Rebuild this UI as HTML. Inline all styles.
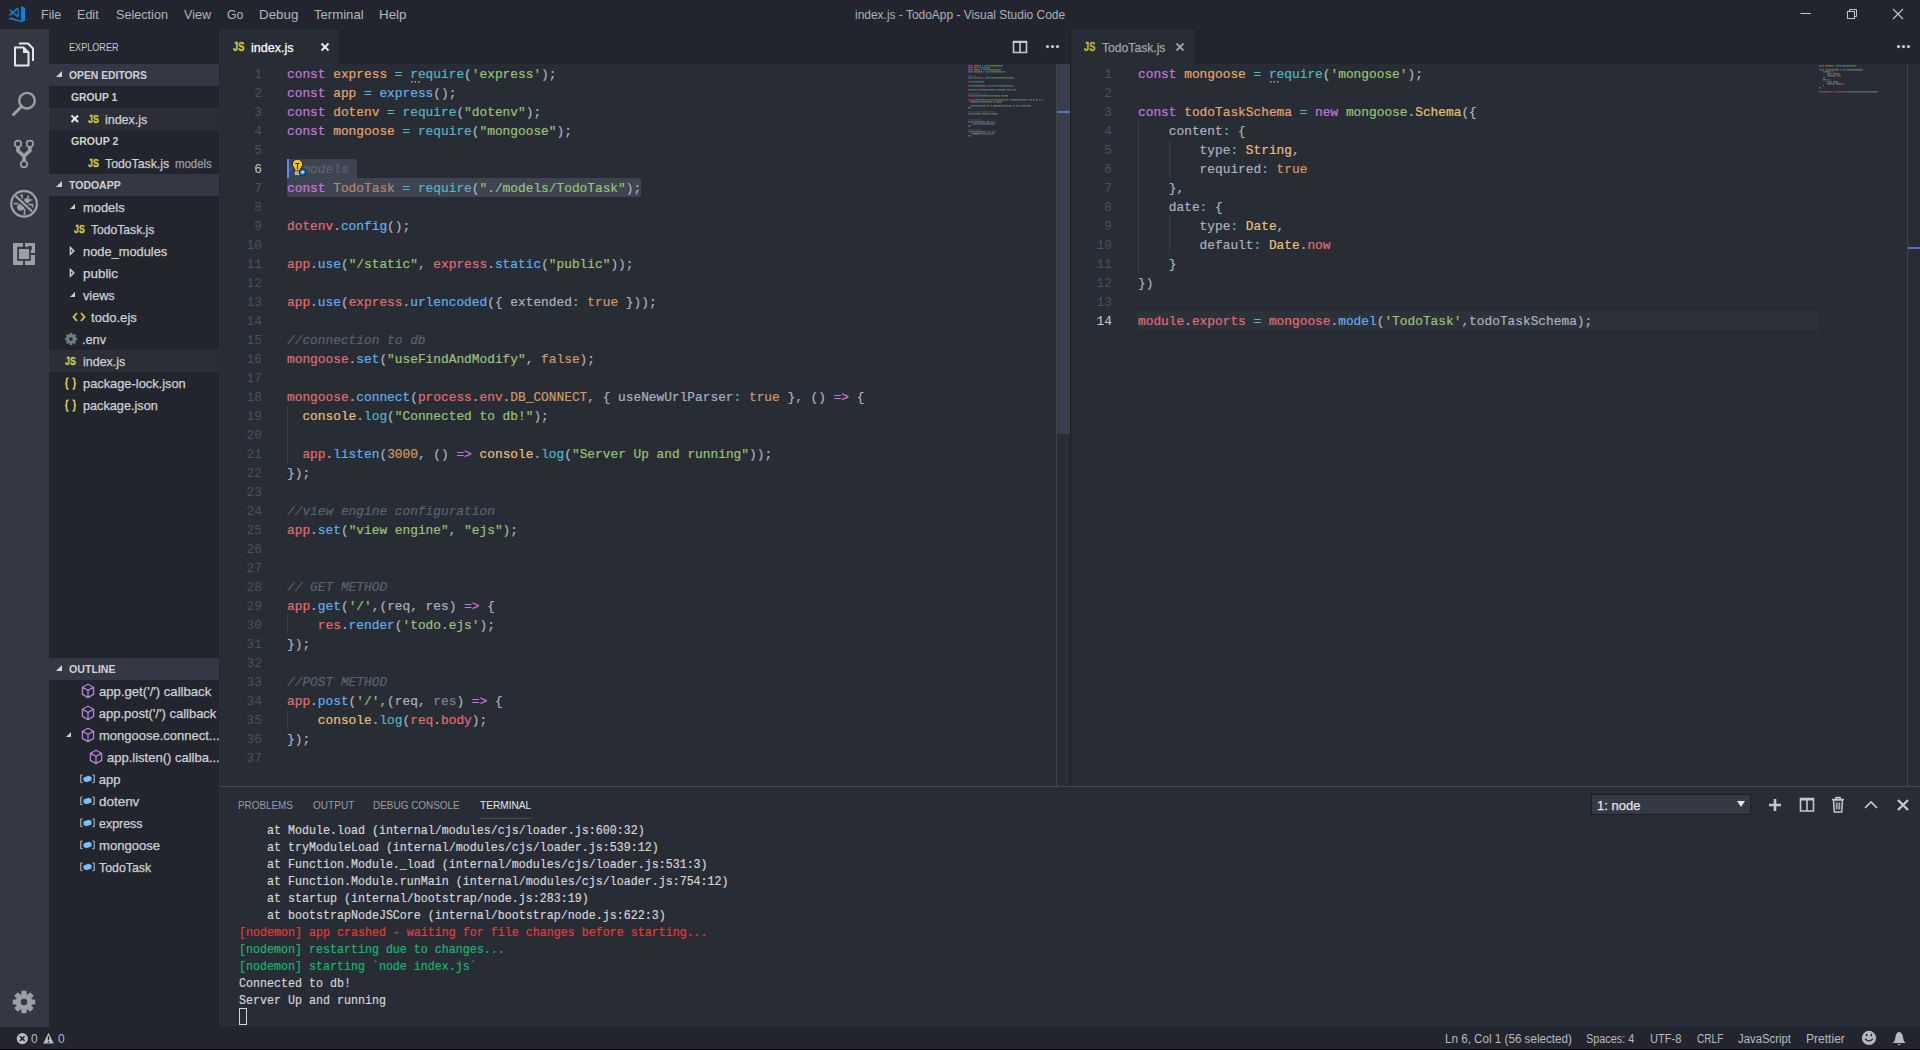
<!DOCTYPE html>
<html><head><meta charset="utf-8">
<style>
*{margin:0;padding:0;box-sizing:border-box}
html,body{width:1920px;height:1050px;overflow:hidden;background:#22252d;font-family:"Liberation Sans",sans-serif;position:relative}
div,span.a{position:absolute}
span{position:static}
.bx{position:absolute}
#title{left:0;top:0;width:1920px;height:29px;background:#22252d}
.menu{top:7px;font-size:13px;color:#b3b6bb;line-height:15px;white-space:nowrap}
#actbar{left:0;top:29px;width:49px;height:998px;background:#343842}
#actline{left:0;top:28px;width:49px;height:1px;background:#1e2126}
#actline2{left:49px;top:28px;width:1px;height:999px;background:#1e2126}
#side{left:49px;top:29px;width:170px;height:998px;background:#22252d}
.sh{left:49px;width:170px;height:22px;background:#343844}
.st{font-size:11px;line-height:22px;color:#cfd1d4;white-space:nowrap;font-weight:bold}
.row{left:49px;width:170px;height:22px}
.it{font-size:13px;line-height:22px;color:#cfd1d4;white-space:nowrap;margin-top:1px;-webkit-text-stroke:0.25px currentColor}
.tri{width:0;height:0;border-style:solid;border-width:0 0 6px 6px;border-color:transparent transparent #cfd1d4 transparent}
.trr{width:6px;height:9px}
.js{font-weight:bold;font-size:11px;color:#cbcb41;line-height:22px;white-space:nowrap;transform:scaleX(0.8);transform-origin:0 0;-webkit-text-stroke:0.35px currentColor}
.jb{font-weight:bold;font-size:12px;color:#cbcb41;line-height:22px;white-space:nowrap;letter-spacing:0.5px}
#tabs{left:219px;top:29px;width:1701px;height:35px;background:#22252d}
#ed1{left:219px;top:64px;width:851px;height:722px;background:#282c34}
#ed2{left:1071px;top:64px;width:849px;height:722px;background:#282c34}
#gsep{left:1070px;top:29px;width:1px;height:757px;background:#1b1c20}
.ln{width:40px;text-align:right;font-family:"Liberation Mono",monospace;font-size:12.83px;line-height:19px;color:#495162;white-space:pre}
.ln.act{color:#c4c8ce}
.cl{font-family:"Liberation Mono",monospace;font-size:12.83px;line-height:19px;color:#abb2bf;white-space:pre;-webkit-text-stroke:0.2px currentColor}
.k{color:#c678dd}.d{color:#e5a66b}.o{color:#56b6c2}.f{color:#61afef}.r{color:#e06c75}.s{color:#98c379}.n{color:#d19a66}.y{color:#e5c07b}.c{color:#5c6370;font-style:italic}.g{color:#98c379}.u{color:#7f848e}.dd{color:#b38a66}
#panel{left:219px;top:786px;width:1701px;height:241px;background:#282c34}
#pborder{left:219px;top:786px;width:1701px;height:1px;background:#43464d}
.ptab{top:799px;font-size:11px;line-height:13px;color:#9a9ca1;white-space:nowrap}
.term{left:239px;font-family:"Liberation Mono",monospace;font-size:13.2px;line-height:17px;color:#d4d6d9;white-space:pre;-webkit-text-stroke:0.2px currentColor;transform:scaleX(0.8838);transform-origin:0 0}
#status{left:0;top:1027px;width:1920px;height:23px;background:#22252d}
.stt{top:1032px;font-size:12px;line-height:14px;color:#b8bbc0;white-space:nowrap}
svg{position:absolute;overflow:visible}
</style></head><body>
<div id="title"></div>
<svg style="left:0;top:0" width="40" height="29" viewBox="0 0 40 29"><path d="M21 6 L23.5 7 L25 7.8 V20.3 L22.5 21.8 L21 22 Z" fill="#0a84e0"/><path d="M9.6 18.6 C12.5 17.6 15 20.8 21.5 21.3" stroke="#0a84e0" stroke-width="1.6" fill="none" stroke-linecap="round"/><path d="M10.2 10.2 L17.2 16.3 M10.2 14.9 L17.2 8.6" stroke="#0a84e0" stroke-width="1.5" stroke-linecap="round"/><path d="M17.5 8.2 L18.8 8.8 V16.8 L17.5 17.3 Z" fill="#0a84e0"/></svg>
<div class="menu" id="m_file" style="left:41.0px;transform:scaleX(0.963);transform-origin:0 0">File</div>
<div class="menu" id="m_edit" style="left:76.5px;transform:scaleX(0.966);transform-origin:0 0">Edit</div>
<div class="menu" id="m_sel" style="left:115.5px;transform:scaleX(0.972);transform-origin:0 0">Selection</div>
<div class="menu" id="m_view" style="left:183.8px;transform:scaleX(0.964);transform-origin:0 0">View</div>
<div class="menu" id="m_go" style="left:227.0px;transform:scaleX(0.941);transform-origin:0 0">Go</div>
<div class="menu" id="m_debug" style="left:258.5px;transform:scaleX(1.027);transform-origin:0 0">Debug</div>
<div class="menu" id="m_term" style="left:313.8px;transform:scaleX(1.010);transform-origin:0 0">Terminal</div>
<div class="menu" id="m_help" style="left:378.5px;transform:scaleX(1.029);transform-origin:0 0">Help</div>
<div class="menu" id="m_title" style="left:855.0px;color:#aeb1b6;transform:scaleX(0.919);transform-origin:0 0">index.js - TodoApp - Visual Studio Code</div>
<svg style="left:1795px;top:5px" width="20" height="20"><path d="M5.5 8.5 H16" stroke="#c4c6ca" stroke-width="1"/></svg>
<svg style="left:1840px;top:5px" width="20" height="20"><rect x="7.5" y="6.5" width="7" height="7" stroke="#c4c6ca" stroke-width="1" fill="none"/><path d="M9.5 6.5 V4.5 H16.5 V11.5 H14.5" stroke="#c4c6ca" stroke-width="1" fill="none"/></svg>
<svg style="left:1888px;top:5px" width="20" height="20"><path d="M5 4 L15 14 M15 4 L5 14" stroke="#c4c6ca" stroke-width="1.1" fill="none"/></svg>

<div id="actbar"></div><div id="actline"></div>

<svg style="left:0;top:29px" width="49" height="50" viewBox="0 29 49 50">
<path d="M19 43.5 H28 L33 48.5 V61" stroke="#e6e7ea" stroke-width="2" fill="none"/>
<path d="M15 47.5 H23.5 L28.5 52.5 V65.5 H15 Z" stroke="#e6e7ea" stroke-width="2" fill="none" stroke-linejoin="round"/>
<path d="M23 47 V53 H29" fill="#e6e7ea"/>
</svg>
<svg style="left:0;top:80px" width="49" height="50" viewBox="0 80 49 50">
<circle cx="27" cy="100.7" r="7.8" stroke="#9c9fa6" stroke-width="2.4" fill="none"/>
<path d="M21.5 106.5 L13.5 114.5" stroke="#9c9fa6" stroke-width="3" stroke-linecap="round"/>
</svg>
<svg style="left:0;top:130px" width="49" height="50" viewBox="0 130 49 50">
<circle cx="18" cy="143.8" r="3.2" stroke="#9c9fa6" stroke-width="1.7" fill="none"/>
<circle cx="29.9" cy="143.8" r="3.2" stroke="#9c9fa6" stroke-width="1.7" fill="none"/>
<circle cx="24" cy="164.2" r="3.2" stroke="#9c9fa6" stroke-width="1.7" fill="none"/>
<path d="M18 146.5 V150.8 L24 156 L29.9 150.8 V146.5 M24 155 V161.5" stroke="#9c9fa6" stroke-width="3.6" fill="none" stroke-linejoin="miter"/>
</svg>
<svg style="left:0;top:180px" width="49" height="50" viewBox="0 180 49 50">
<circle cx="24.1" cy="203.8" r="12.8" stroke="#9c9fa6" stroke-width="2.3" fill="none"/>
<ellipse cx="20.7" cy="207.3" rx="3.6" ry="3.4" fill="#9c9fa6"/>
<ellipse cx="27" cy="200.6" rx="2.9" ry="2.7" fill="#9c9fa6"/>
<path d="M20.3 195.3 H22 V200 M13.8 203.6 H18.5 M27.8 204.6 H32.6 V207.5 M24.6 208.5 V214.2 H23.5 M28.2 195.5 V198 M29 200 H32.3" stroke="#9c9fa6" stroke-width="1.6" fill="none"/>
<path d="M15.5 195.9 L32.2 211.5" stroke="#343842" stroke-width="5"/>
<path d="M15.5 195.9 L32.2 211.5" stroke="#9c9fa6" stroke-width="2.3"/>
</svg>
<svg style="left:0;top:230px" width="49" height="50" viewBox="0 230 49 50">
<rect x="13" y="243" width="22" height="22" fill="#9c9fa6"/>
<rect x="23" y="243" width="2" height="4" fill="#343842"/>
<rect x="23" y="261" width="2" height="4" fill="#343842"/>
<rect x="31" y="253" width="4" height="2" fill="#343842"/>
<rect x="17.2" y="246.8" width="13.6" height="14" fill="#343842"/>
<rect x="28.2" y="246.1" width="3.6" height="3.8" fill="#343842"/>
<rect x="19" y="249" width="10.1" height="10" fill="#9c9fa6"/>
</svg>
<svg style="left:0;top:980px" width="49" height="45" viewBox="0 980 49 45">
<g transform="translate(24 1002)" fill="#9c9fa6">
<circle r="8.2"/>
<rect x="-2.6" y="-11.2" width="5.2" height="22.4" rx="0.8"/>
<rect x="-2.6" y="-11.2" width="5.2" height="22.4" rx="0.8" transform="rotate(45)"/>
<rect x="-2.6" y="-11.2" width="5.2" height="22.4" rx="0.8" transform="rotate(90)"/>
<rect x="-2.6" y="-11.2" width="5.2" height="22.4" rx="0.8" transform="rotate(135)"/>
</g>
<circle cx="24" cy="1002" r="3.3" fill="#343842"/>
</svg>

<div id="side"></div>
<div class="st" id="m_expl" style="left:69.0px;top:36px;font-weight:normal;color:#c7c9cd;transform:scaleX(0.827);transform-origin:0 0">EXPLORER</div>
<div class="sh" style="top:64px"></div>
<div class="tri" style="left:56px;top:71px"></div>
<div class="st" id="m_oe" style="left:69.0px;top:64px;transform:scaleX(0.940);transform-origin:0 0">OPEN EDITORS</div>
<div class="sh" style="top:174px"></div>
<div class="tri" style="left:56px;top:181px"></div>
<div class="st" id="m_ta" style="left:69.4px;top:174px;transform:scaleX(0.954);transform-origin:0 0">TODOAPP</div>
<div class="sh" style="top:658px"></div>
<div class="tri" style="left:56px;top:665px"></div>
<div class="st" id="m_ol" style="left:68.8px;top:658px;transform:scaleX(0.965);transform-origin:0 0">OUTLINE</div>
<div class="st" id="m_g1" style="left:70.8px;top:86px;transform:scaleX(0.940);transform-origin:0 0">GROUP 1</div>
<div class="st" id="m_g2" style="left:70.8px;top:130px;transform:scaleX(0.959);transform-origin:0 0">GROUP 2</div>
<div class="row" style="top:108px;background:#2b2e37"></div>
<svg style="left:70px;top:114px" width="10" height="10"><path d="M1.5 1.5 L8 8 M8 1.5 L1.5 8" stroke="#e8e9eb" stroke-width="2"/></svg>
<div class="js" style="left:88px;top:108px">JS</div>
<div class="it" id="m_oe1" style="left:104.9px;top:108px;transform:scaleX(0.957);transform-origin:0 0">index.js</div>
<div class="js" style="left:88px;top:152px">JS</div>
<div class="it" id="m_oe2" style="left:104.8px;top:152px;transform:scaleX(0.944);transform-origin:0 0">TodoTask.js</div>
<div class="it" id="m_oe2b" style="left:174.9px;top:152px;font-size:12px;color:#9a9da2;transform:scaleX(0.951);transform-origin:0 0">models</div>
<div class="tri" style="left:70px;top:204px;border-width:0 0 5px 5px"></div>
<div class="it" id="m_models" style="left:83.1px;top:196px;transform:scaleX(0.993);transform-origin:0 0">models</div>
<div class="js" style="left:74px;top:218px">JS</div>
<div class="it" id="m_tt1" style="left:91.4px;top:218px;transform:scaleX(0.932);transform-origin:0 0">TodoTask.js</div>
<svg style="left:69px;top:246px" width="7" height="10"><path d="M1.4 1.6 L4.9 4.9 L1.4 8.2 Z" stroke="#cfd1d4" stroke-width="1.4" fill="none" stroke-linejoin="miter"/></svg>
<div class="it" id="m_nm" style="left:82.9px;top:240px;transform:scaleX(0.988);transform-origin:0 0">node_modules</div>
<svg style="left:69px;top:268px" width="7" height="10"><path d="M1.4 1.6 L4.9 4.9 L1.4 8.2 Z" stroke="#cfd1d4" stroke-width="1.4" fill="none" stroke-linejoin="miter"/></svg>
<div class="it" id="m_pub" style="left:82.9px;top:262px;transform:scaleX(1.032);transform-origin:0 0">public</div>
<div class="tri" style="left:70px;top:292px;border-width:0 0 5px 5px"></div>
<div class="it" id="m_views" style="left:82.9px;top:284px;transform:scaleX(0.972);transform-origin:0 0">views</div>
<svg style="left:72px;top:311px" width="14" height="12"><path d="M5 2 L1.5 6 L5 10 M9 2 L12.5 6 L9 10" stroke="#cbcb41" stroke-width="1.8" fill="none"/></svg>
<div class="it" id="m_ejs" style="left:91.0px;top:306px;transform:scaleX(1.007);transform-origin:0 0">todo.ejs</div>
<svg style="left:64px;top:332px" width="14" height="14"><g transform="translate(7 7)" fill="#6d8086"><circle r="4.2"/><rect x="-1.4" y="-6" width="2.8" height="12"/><rect x="-1.4" y="-6" width="2.8" height="12" transform="rotate(45)"/><rect x="-1.4" y="-6" width="2.8" height="12" transform="rotate(90)"/><rect x="-1.4" y="-6" width="2.8" height="12" transform="rotate(135)"/></g><circle cx="7" cy="7" r="1.8" fill="#22252d"/></svg>
<div class="it" id="m_env" style="left:81.9px;top:328px;transform:scaleX(0.979);transform-origin:0 0">.env</div>
<div class="row" style="top:350px;background:#2b2e37"></div>
<div class="js" style="left:65px;top:350px">JS</div>
<div class="it" id="m_idx" style="left:82.9px;top:350px;transform:scaleX(0.961);transform-origin:0 0">index.js</div>
<svg style="left:64px;top:377px" width="14" height="14"><path d="M4.6 1.2 Q2.6 1.2 2.6 3.2 V5 Q2.6 6.4 1.3 6.6 Q2.6 6.8 2.6 8.2 V10 Q2.6 12 4.6 12 M8.6 1.2 Q10.6 1.2 10.6 3.2 V5 Q10.6 6.4 11.9 6.6 Q10.6 6.8 10.6 8.2 V10 Q10.6 12 8.6 12" stroke="#cbcb41" stroke-width="1.7" fill="none"/></svg>
<div class="it" id="m_pl" style="left:82.9px;top:372px;transform:scaleX(0.987);transform-origin:0 0">package-lock.json</div>
<svg style="left:64px;top:399px" width="14" height="14"><path d="M4.6 1.2 Q2.6 1.2 2.6 3.2 V5 Q2.6 6.4 1.3 6.6 Q2.6 6.8 2.6 8.2 V10 Q2.6 12 4.6 12 M8.6 1.2 Q10.6 1.2 10.6 3.2 V5 Q10.6 6.4 11.9 6.6 Q10.6 6.8 10.6 8.2 V10 Q10.6 12 8.6 12" stroke="#cbcb41" stroke-width="1.7" fill="none"/></svg>
<div class="it" id="m_pj" style="left:82.9px;top:394px;transform:scaleX(0.976);transform-origin:0 0">package.json</div>
<svg style="left:81px;top:683px" width="14" height="16" viewBox="0 0 14 16"><path d="M7 1.2 L12.6 4.2 V11.4 L7 14.6 L1.4 11.4 V4.2 Z M1.6 4.3 L7 7.4 L12.4 4.3 M7 7.4 V14.4" stroke="#b180d7" stroke-width="1.3" fill="none" stroke-linejoin="round"/></svg>
<div class="it" id="m_o0" style="left:98.7px;top:680px;transform:scaleX(1.009);transform-origin:0 0">app.get('/') callback</div>
<svg style="left:81px;top:705px" width="14" height="16" viewBox="0 0 14 16"><path d="M7 1.2 L12.6 4.2 V11.4 L7 14.6 L1.4 11.4 V4.2 Z M1.6 4.3 L7 7.4 L12.4 4.3 M7 7.4 V14.4" stroke="#b180d7" stroke-width="1.3" fill="none" stroke-linejoin="round"/></svg>
<div class="it" id="m_o1" style="left:98.7px;top:702px;transform:scaleX(1.000);transform-origin:0 0">app.post('/') callback</div>
<svg style="left:81px;top:727px" width="14" height="16" viewBox="0 0 14 16"><path d="M7 1.2 L12.6 4.2 V11.4 L7 14.6 L1.4 11.4 V4.2 Z M1.6 4.3 L7 7.4 L12.4 4.3 M7 7.4 V14.4" stroke="#b180d7" stroke-width="1.3" fill="none" stroke-linejoin="round"/></svg>
<div class="tri" style="left:66px;top:732px;border-width:0 0 5px 5px"></div>
<div class="it" id="m_o2" style="left:99px;top:724px">mongoose.connect...</div>
<svg style="left:89px;top:749px" width="14" height="16" viewBox="0 0 14 16"><path d="M7 1.2 L12.6 4.2 V11.4 L7 14.6 L1.4 11.4 V4.2 Z M1.6 4.3 L7 7.4 L12.4 4.3 M7 7.4 V14.4" stroke="#b180d7" stroke-width="1.3" fill="none" stroke-linejoin="round"/></svg>
<div class="it" id="m_o3" style="left:107px;top:746px">app.listen() callba...</div>
<svg style="left:80px;top:774px" width="15" height="10" viewBox="0 0 15 10"><path d="M2.5 1 H0.8 V8.6 H2.5 M12.5 1 H14.2 V8.6 H12.5" stroke="#c5c7cb" stroke-width="1" fill="none"/><path d="M3.5 3.5 L8.5 1.8 L11.5 3 V6.5 L6.5 8.2 L3.5 7 Z" fill="#75beff"/></svg>
<div class="it" id="m_o4" style="left:98.7px;top:768px;transform:scaleX(1.000);transform-origin:0 0">app</div>
<svg style="left:80px;top:796px" width="15" height="10" viewBox="0 0 15 10"><path d="M2.5 1 H0.8 V8.6 H2.5 M12.5 1 H14.2 V8.6 H12.5" stroke="#c5c7cb" stroke-width="1" fill="none"/><path d="M3.5 3.5 L8.5 1.8 L11.5 3 V6.5 L6.5 8.2 L3.5 7 Z" fill="#75beff"/></svg>
<div class="it" id="m_o5" style="left:98.7px;top:790px;transform:scaleX(1.033);transform-origin:0 0">dotenv</div>
<svg style="left:80px;top:818px" width="15" height="10" viewBox="0 0 15 10"><path d="M2.5 1 H0.8 V8.6 H2.5 M12.5 1 H14.2 V8.6 H12.5" stroke="#c5c7cb" stroke-width="1" fill="none"/><path d="M3.5 3.5 L8.5 1.8 L11.5 3 V6.5 L6.5 8.2 L3.5 7 Z" fill="#75beff"/></svg>
<div class="it" id="m_o6" style="left:98.7px;top:812px;transform:scaleX(0.956);transform-origin:0 0">express</div>
<svg style="left:80px;top:840px" width="15" height="10" viewBox="0 0 15 10"><path d="M2.5 1 H0.8 V8.6 H2.5 M12.5 1 H14.2 V8.6 H12.5" stroke="#c5c7cb" stroke-width="1" fill="none"/><path d="M3.5 3.5 L8.5 1.8 L11.5 3 V6.5 L6.5 8.2 L3.5 7 Z" fill="#75beff"/></svg>
<div class="it" id="m_o7" style="left:98.7px;top:834px;transform:scaleX(1.005);transform-origin:0 0">mongoose</div>
<svg style="left:80px;top:862px" width="15" height="10" viewBox="0 0 15 10"><path d="M2.5 1 H0.8 V8.6 H2.5 M12.5 1 H14.2 V8.6 H12.5" stroke="#c5c7cb" stroke-width="1" fill="none"/><path d="M3.5 3.5 L8.5 1.8 L11.5 3 V6.5 L6.5 8.2 L3.5 7 Z" fill="#75beff"/></svg>
<div class="it" id="m_o8" style="left:98.7px;top:856px;transform:scaleX(0.949);transform-origin:0 0">TodoTask</div>
<div id="tabs"></div>
<div id="ed1"></div>
<div id="ed2"></div>
<div id="gsep"></div>

<div style="left:219px;top:29px;width:119px;height:35px;background:#282c34"></div>
<div class="js" style="left:233px;top:36px;font-size:12px;transform:scaleX(0.77)">JS</div>
<div class="it" id="m_tab1" style="left:250.8px;top:36px;color:#ffffff;transform:scaleX(0.966);transform-origin:0 0">index.js</div>
<svg style="left:319px;top:41px" width="12" height="12"><path d="M2.5 2.5 L9.5 9.5 M9.5 2.5 L2.5 9.5" stroke="#e8e9eb" stroke-width="2"/></svg>
<svg style="left:1012px;top:40px" width="16" height="14"><path d="M1.5 1.5 H14.5 V12.5 H1.5 Z M8 1.5 V12.5" stroke="#c5c7cb" stroke-width="1.6" fill="none"/><path d="M1 1 H15 V3 H1 Z" fill="#c5c7cb"/></svg>
<svg style="left:1044px;top:44px" width="17" height="6"><circle cx="3.5" cy="2.6" r="1.6" fill="#c5c7cb"/><circle cx="8.5" cy="2.6" r="1.6" fill="#c5c7cb"/><circle cx="13.5" cy="2.6" r="1.6" fill="#c5c7cb"/></svg>
<div style="left:1071px;top:29px;width:123px;height:35px;background:#282c34"></div>
<div class="js" style="left:1084px;top:36px;font-size:12px;transform:scaleX(0.77);color:#b7b83f">JS</div>
<div class="it" id="m_tab2" style="left:1102.3px;top:36px;color:#a0a3a8;transform:scaleX(0.934);transform-origin:0 0">TodoTask.js</div>
<svg style="left:1174px;top:41px" width="12" height="12"><path d="M2.5 2.5 L9.5 9.5 M9.5 2.5 L2.5 9.5" stroke="#9c9fa4" stroke-width="1.8"/></svg>
<svg style="left:1895px;top:44px" width="17" height="6"><circle cx="3.5" cy="2.6" r="1.6" fill="#c5c7cb"/><circle cx="8.5" cy="2.6" r="1.6" fill="#c5c7cb"/><circle cx="13.5" cy="2.6" r="1.6" fill="#c5c7cb"/></svg>

<div style="left:1138px;top:311px;width:681px;height:19px;background:#2c313a"></div>
<div style="left:287px;top:159px;width:70px;height:20px;background:#3e4451;border-radius:3px 3px 0 0"></div>
<div style="left:287px;top:178px;width:354px;height:19px;background:#3e4451;border-radius:0 3px 3px 3px"></div>
<div style="left:287px;top:406px;width:1px;height:57px;background:#3b4048"></div>
<div style="left:287px;top:615px;width:1px;height:19px;background:#3b4048"></div>
<div style="left:287px;top:710px;width:1px;height:19px;background:#3b4048"></div>
<div style="left:1138px;top:121px;width:1px;height:152px;background:#3b4048"></div>
<div style="left:1169px;top:140px;width:1px;height:38px;background:#3b4048"></div>
<div style="left:1169px;top:216px;width:1px;height:38px;background:#3b4048"></div>
<div style="left:1056px;top:64px;width:1px;height:722px;background:#404349"></div>
<div style="left:1057px;top:64px;width:13px;height:370px;background:#383e4a"></div>
<div style="left:1057px;top:111px;width:13px;height:2px;background:#4c76c2"></div>
<div style="left:1907px;top:64px;width:1px;height:722px;background:#404349"></div>
<div style="left:1908px;top:247px;width:12px;height:2px;background:#4c76c2"></div>
<svg style="left:968px;top:65px" width="120" height="76"><rect x="0" y="0" width="5" height="1.6" fill="#c678dd" opacity="0.38"/><rect x="6" y="0" width="7" height="1.6" fill="#e5a66b" opacity="0.38"/><rect x="14" y="0" width="1" height="1.6" fill="#56b6c2" opacity="0.38"/><rect x="16" y="0" width="7" height="1.6" fill="#56b6c2" opacity="0.38"/><rect x="23" y="0" width="1" height="1.6" fill="#abb2bf" opacity="0.38"/><rect x="24" y="0" width="9" height="1.6" fill="#98c379" opacity="0.38"/><rect x="33" y="0" width="2" height="1.6" fill="#abb2bf" opacity="0.38"/><rect x="0" y="2" width="5" height="1.6" fill="#c678dd" opacity="0.38"/><rect x="6" y="2" width="3" height="1.6" fill="#e5a66b" opacity="0.38"/><rect x="10" y="2" width="1" height="1.6" fill="#56b6c2" opacity="0.38"/><rect x="12" y="2" width="7" height="1.6" fill="#61afef" opacity="0.38"/><rect x="19" y="2" width="3" height="1.6" fill="#abb2bf" opacity="0.38"/><rect x="0" y="4" width="5" height="1.6" fill="#c678dd" opacity="0.38"/><rect x="6" y="4" width="6" height="1.6" fill="#e5a66b" opacity="0.38"/><rect x="13" y="4" width="1" height="1.6" fill="#56b6c2" opacity="0.38"/><rect x="15" y="4" width="7" height="1.6" fill="#56b6c2" opacity="0.38"/><rect x="22" y="4" width="1" height="1.6" fill="#abb2bf" opacity="0.38"/><rect x="23" y="4" width="8" height="1.6" fill="#98c379" opacity="0.38"/><rect x="31" y="4" width="2" height="1.6" fill="#abb2bf" opacity="0.38"/><rect x="0" y="6" width="5" height="1.6" fill="#c678dd" opacity="0.38"/><rect x="6" y="6" width="8" height="1.6" fill="#e5a66b" opacity="0.38"/><rect x="15" y="6" width="1" height="1.6" fill="#56b6c2" opacity="0.38"/><rect x="17" y="6" width="7" height="1.6" fill="#56b6c2" opacity="0.38"/><rect x="24" y="6" width="1" height="1.6" fill="#abb2bf" opacity="0.38"/><rect x="25" y="6" width="10" height="1.6" fill="#98c379" opacity="0.38"/><rect x="35" y="6" width="2" height="1.6" fill="#abb2bf" opacity="0.38"/><rect x="0" y="10" width="8" height="1.6" fill="#5c6370" opacity="0.38"/><rect x="0" y="12" width="5" height="1.6" fill="#c678dd" opacity="0.38"/><rect x="6" y="12" width="8" height="1.6" fill="#b38a66" opacity="0.38"/><rect x="15" y="12" width="1" height="1.6" fill="#56b6c2" opacity="0.38"/><rect x="17" y="12" width="7" height="1.6" fill="#56b6c2" opacity="0.38"/><rect x="24" y="12" width="1" height="1.6" fill="#abb2bf" opacity="0.38"/><rect x="25" y="12" width="19" height="1.6" fill="#98c379" opacity="0.38"/><rect x="44" y="12" width="2" height="1.6" fill="#abb2bf" opacity="0.38"/><rect x="0" y="16" width="6" height="1.6" fill="#e06c75" opacity="0.38"/><rect x="6" y="16" width="1" height="1.6" fill="#abb2bf" opacity="0.38"/><rect x="7" y="16" width="6" height="1.6" fill="#61afef" opacity="0.38"/><rect x="13" y="16" width="3" height="1.6" fill="#abb2bf" opacity="0.38"/><rect x="0" y="20" width="3" height="1.6" fill="#e06c75" opacity="0.38"/><rect x="3" y="20" width="1" height="1.6" fill="#abb2bf" opacity="0.38"/><rect x="4" y="20" width="3" height="1.6" fill="#61afef" opacity="0.38"/><rect x="7" y="20" width="1" height="1.6" fill="#abb2bf" opacity="0.38"/><rect x="8" y="20" width="9" height="1.6" fill="#98c379" opacity="0.38"/><rect x="17" y="20" width="1" height="1.6" fill="#abb2bf" opacity="0.38"/><rect x="19" y="20" width="7" height="1.6" fill="#e06c75" opacity="0.38"/><rect x="26" y="20" width="1" height="1.6" fill="#abb2bf" opacity="0.38"/><rect x="27" y="20" width="6" height="1.6" fill="#61afef" opacity="0.38"/><rect x="33" y="20" width="1" height="1.6" fill="#abb2bf" opacity="0.38"/><rect x="34" y="20" width="8" height="1.6" fill="#98c379" opacity="0.38"/><rect x="42" y="20" width="3" height="1.6" fill="#abb2bf" opacity="0.38"/><rect x="0" y="24" width="3" height="1.6" fill="#e06c75" opacity="0.38"/><rect x="3" y="24" width="1" height="1.6" fill="#abb2bf" opacity="0.38"/><rect x="4" y="24" width="3" height="1.6" fill="#61afef" opacity="0.38"/><rect x="7" y="24" width="1" height="1.6" fill="#abb2bf" opacity="0.38"/><rect x="8" y="24" width="7" height="1.6" fill="#e06c75" opacity="0.38"/><rect x="15" y="24" width="1" height="1.6" fill="#abb2bf" opacity="0.38"/><rect x="16" y="24" width="10" height="1.6" fill="#61afef" opacity="0.38"/><rect x="26" y="24" width="2" height="1.6" fill="#abb2bf" opacity="0.38"/><rect x="29" y="24" width="8" height="1.6" fill="#abb2bf" opacity="0.38"/><rect x="37" y="24" width="1" height="1.6" fill="#56b6c2" opacity="0.38"/><rect x="39" y="24" width="4" height="1.6" fill="#d19a66" opacity="0.38"/><rect x="44" y="24" width="4" height="1.6" fill="#abb2bf" opacity="0.38"/><rect x="0" y="28" width="12" height="1.6" fill="#5c6370" opacity="0.38"/><rect x="13" y="28" width="2" height="1.6" fill="#5c6370" opacity="0.38"/><rect x="16" y="28" width="2" height="1.6" fill="#5c6370" opacity="0.38"/><rect x="0" y="30" width="8" height="1.6" fill="#e06c75" opacity="0.38"/><rect x="8" y="30" width="1" height="1.6" fill="#abb2bf" opacity="0.38"/><rect x="9" y="30" width="3" height="1.6" fill="#61afef" opacity="0.38"/><rect x="12" y="30" width="1" height="1.6" fill="#abb2bf" opacity="0.38"/><rect x="13" y="30" width="18" height="1.6" fill="#98c379" opacity="0.38"/><rect x="31" y="30" width="1" height="1.6" fill="#abb2bf" opacity="0.38"/><rect x="33" y="30" width="5" height="1.6" fill="#d19a66" opacity="0.38"/><rect x="38" y="30" width="2" height="1.6" fill="#abb2bf" opacity="0.38"/><rect x="0" y="34" width="8" height="1.6" fill="#e06c75" opacity="0.38"/><rect x="8" y="34" width="1" height="1.6" fill="#abb2bf" opacity="0.38"/><rect x="9" y="34" width="7" height="1.6" fill="#61afef" opacity="0.38"/><rect x="16" y="34" width="1" height="1.6" fill="#abb2bf" opacity="0.38"/><rect x="17" y="34" width="7" height="1.6" fill="#e06c75" opacity="0.38"/><rect x="24" y="34" width="1" height="1.6" fill="#abb2bf" opacity="0.38"/><rect x="25" y="34" width="3" height="1.6" fill="#e06c75" opacity="0.38"/><rect x="28" y="34" width="1" height="1.6" fill="#abb2bf" opacity="0.38"/><rect x="29" y="34" width="10" height="1.6" fill="#d19a66" opacity="0.38"/><rect x="39" y="34" width="1" height="1.6" fill="#abb2bf" opacity="0.38"/><rect x="41" y="34" width="1" height="1.6" fill="#abb2bf" opacity="0.38"/><rect x="43" y="34" width="15" height="1.6" fill="#abb2bf" opacity="0.38"/><rect x="58" y="34" width="1" height="1.6" fill="#56b6c2" opacity="0.38"/><rect x="60" y="34" width="4" height="1.6" fill="#d19a66" opacity="0.38"/><rect x="65" y="34" width="2" height="1.6" fill="#abb2bf" opacity="0.38"/><rect x="68" y="34" width="2" height="1.6" fill="#abb2bf" opacity="0.38"/><rect x="71" y="34" width="2" height="1.6" fill="#c678dd" opacity="0.38"/><rect x="74" y="34" width="1" height="1.6" fill="#abb2bf" opacity="0.38"/><rect x="2" y="36" width="7" height="1.6" fill="#e5c07b" opacity="0.38"/><rect x="9" y="36" width="1" height="1.6" fill="#abb2bf" opacity="0.38"/><rect x="10" y="36" width="3" height="1.6" fill="#56b6c2" opacity="0.38"/><rect x="13" y="36" width="1" height="1.6" fill="#abb2bf" opacity="0.38"/><rect x="14" y="36" width="10" height="1.6" fill="#98c379" opacity="0.38"/><rect x="25" y="36" width="2" height="1.6" fill="#98c379" opacity="0.38"/><rect x="28" y="36" width="4" height="1.6" fill="#98c379" opacity="0.38"/><rect x="32" y="36" width="2" height="1.6" fill="#abb2bf" opacity="0.38"/><rect x="2" y="40" width="3" height="1.6" fill="#e06c75" opacity="0.38"/><rect x="5" y="40" width="1" height="1.6" fill="#abb2bf" opacity="0.38"/><rect x="6" y="40" width="6" height="1.6" fill="#61afef" opacity="0.38"/><rect x="12" y="40" width="1" height="1.6" fill="#abb2bf" opacity="0.38"/><rect x="13" y="40" width="4" height="1.6" fill="#d19a66" opacity="0.38"/><rect x="17" y="40" width="1" height="1.6" fill="#abb2bf" opacity="0.38"/><rect x="19" y="40" width="2" height="1.6" fill="#abb2bf" opacity="0.38"/><rect x="22" y="40" width="2" height="1.6" fill="#c678dd" opacity="0.38"/><rect x="25" y="40" width="7" height="1.6" fill="#e5c07b" opacity="0.38"/><rect x="32" y="40" width="1" height="1.6" fill="#abb2bf" opacity="0.38"/><rect x="33" y="40" width="3" height="1.6" fill="#56b6c2" opacity="0.38"/><rect x="36" y="40" width="1" height="1.6" fill="#abb2bf" opacity="0.38"/><rect x="37" y="40" width="7" height="1.6" fill="#98c379" opacity="0.38"/><rect x="45" y="40" width="2" height="1.6" fill="#98c379" opacity="0.38"/><rect x="48" y="40" width="3" height="1.6" fill="#98c379" opacity="0.38"/><rect x="52" y="40" width="8" height="1.6" fill="#98c379" opacity="0.38"/><rect x="60" y="40" width="3" height="1.6" fill="#abb2bf" opacity="0.38"/><rect x="0" y="42" width="3" height="1.6" fill="#abb2bf" opacity="0.38"/><rect x="0" y="46" width="6" height="1.6" fill="#5c6370" opacity="0.38"/><rect x="7" y="46" width="6" height="1.6" fill="#5c6370" opacity="0.38"/><rect x="14" y="46" width="13" height="1.6" fill="#5c6370" opacity="0.38"/><rect x="0" y="48" width="3" height="1.6" fill="#e06c75" opacity="0.38"/><rect x="3" y="48" width="1" height="1.6" fill="#abb2bf" opacity="0.38"/><rect x="4" y="48" width="3" height="1.6" fill="#61afef" opacity="0.38"/><rect x="7" y="48" width="1" height="1.6" fill="#abb2bf" opacity="0.38"/><rect x="8" y="48" width="5" height="1.6" fill="#98c379" opacity="0.38"/><rect x="14" y="48" width="7" height="1.6" fill="#98c379" opacity="0.38"/><rect x="21" y="48" width="1" height="1.6" fill="#abb2bf" opacity="0.38"/><rect x="23" y="48" width="5" height="1.6" fill="#98c379" opacity="0.38"/><rect x="28" y="48" width="2" height="1.6" fill="#abb2bf" opacity="0.38"/><rect x="0" y="54" width="2" height="1.6" fill="#5c6370" opacity="0.38"/><rect x="3" y="54" width="3" height="1.6" fill="#5c6370" opacity="0.38"/><rect x="7" y="54" width="6" height="1.6" fill="#5c6370" opacity="0.38"/><rect x="0" y="56" width="3" height="1.6" fill="#e06c75" opacity="0.38"/><rect x="3" y="56" width="1" height="1.6" fill="#abb2bf" opacity="0.38"/><rect x="4" y="56" width="3" height="1.6" fill="#61afef" opacity="0.38"/><rect x="7" y="56" width="1" height="1.6" fill="#abb2bf" opacity="0.38"/><rect x="8" y="56" width="3" height="1.6" fill="#98c379" opacity="0.38"/><rect x="11" y="56" width="6" height="1.6" fill="#abb2bf" opacity="0.38"/><rect x="18" y="56" width="3" height="1.6" fill="#abb2bf" opacity="0.38"/><rect x="21" y="56" width="1" height="1.6" fill="#abb2bf" opacity="0.38"/><rect x="23" y="56" width="2" height="1.6" fill="#c678dd" opacity="0.38"/><rect x="26" y="56" width="1" height="1.6" fill="#abb2bf" opacity="0.38"/><rect x="4" y="58" width="3" height="1.6" fill="#e06c75" opacity="0.38"/><rect x="7" y="58" width="1" height="1.6" fill="#abb2bf" opacity="0.38"/><rect x="8" y="58" width="6" height="1.6" fill="#61afef" opacity="0.38"/><rect x="14" y="58" width="1" height="1.6" fill="#abb2bf" opacity="0.38"/><rect x="15" y="58" width="10" height="1.6" fill="#98c379" opacity="0.38"/><rect x="25" y="58" width="2" height="1.6" fill="#abb2bf" opacity="0.38"/><rect x="0" y="60" width="3" height="1.6" fill="#abb2bf" opacity="0.38"/><rect x="0" y="64" width="6" height="1.6" fill="#5c6370" opacity="0.38"/><rect x="7" y="64" width="6" height="1.6" fill="#5c6370" opacity="0.38"/><rect x="0" y="66" width="3" height="1.6" fill="#e06c75" opacity="0.38"/><rect x="3" y="66" width="1" height="1.6" fill="#abb2bf" opacity="0.38"/><rect x="4" y="66" width="4" height="1.6" fill="#61afef" opacity="0.38"/><rect x="8" y="66" width="1" height="1.6" fill="#abb2bf" opacity="0.38"/><rect x="9" y="66" width="3" height="1.6" fill="#98c379" opacity="0.38"/><rect x="12" y="66" width="6" height="1.6" fill="#abb2bf" opacity="0.38"/><rect x="19" y="66" width="3" height="1.6" fill="#7f848e" opacity="0.38"/><rect x="22" y="66" width="1" height="1.6" fill="#abb2bf" opacity="0.38"/><rect x="24" y="66" width="2" height="1.6" fill="#c678dd" opacity="0.38"/><rect x="27" y="66" width="1" height="1.6" fill="#abb2bf" opacity="0.38"/><rect x="4" y="68" width="7" height="1.6" fill="#e5c07b" opacity="0.38"/><rect x="11" y="68" width="1" height="1.6" fill="#abb2bf" opacity="0.38"/><rect x="12" y="68" width="3" height="1.6" fill="#56b6c2" opacity="0.38"/><rect x="15" y="68" width="1" height="1.6" fill="#abb2bf" opacity="0.38"/><rect x="16" y="68" width="3" height="1.6" fill="#e06c75" opacity="0.38"/><rect x="19" y="68" width="1" height="1.6" fill="#abb2bf" opacity="0.38"/><rect x="20" y="68" width="4" height="1.6" fill="#e06c75" opacity="0.38"/><rect x="24" y="68" width="2" height="1.6" fill="#abb2bf" opacity="0.38"/><rect x="0" y="70" width="3" height="1.6" fill="#abb2bf" opacity="0.38"/></svg>
<svg style="left:1819px;top:65px" width="120" height="30"><rect x="0" y="0" width="5" height="1.6" fill="#c678dd" opacity="0.38"/><rect x="6" y="0" width="8" height="1.6" fill="#e5a66b" opacity="0.38"/><rect x="15" y="0" width="1" height="1.6" fill="#56b6c2" opacity="0.38"/><rect x="17" y="0" width="7" height="1.6" fill="#56b6c2" opacity="0.38"/><rect x="24" y="0" width="1" height="1.6" fill="#abb2bf" opacity="0.38"/><rect x="25" y="0" width="10" height="1.6" fill="#98c379" opacity="0.38"/><rect x="35" y="0" width="2" height="1.6" fill="#abb2bf" opacity="0.38"/><rect x="0" y="4" width="5" height="1.6" fill="#c678dd" opacity="0.38"/><rect x="6" y="4" width="14" height="1.6" fill="#e5a66b" opacity="0.38"/><rect x="21" y="4" width="1" height="1.6" fill="#56b6c2" opacity="0.38"/><rect x="23" y="4" width="3" height="1.6" fill="#c678dd" opacity="0.38"/><rect x="27" y="4" width="8" height="1.6" fill="#98c379" opacity="0.38"/><rect x="35" y="4" width="1" height="1.6" fill="#abb2bf" opacity="0.38"/><rect x="36" y="4" width="6" height="1.6" fill="#e5c07b" opacity="0.38"/><rect x="42" y="4" width="2" height="1.6" fill="#abb2bf" opacity="0.38"/><rect x="4" y="6" width="7" height="1.6" fill="#abb2bf" opacity="0.38"/><rect x="11" y="6" width="1" height="1.6" fill="#56b6c2" opacity="0.38"/><rect x="13" y="6" width="1" height="1.6" fill="#abb2bf" opacity="0.38"/><rect x="8" y="8" width="4" height="1.6" fill="#abb2bf" opacity="0.38"/><rect x="12" y="8" width="1" height="1.6" fill="#56b6c2" opacity="0.38"/><rect x="14" y="8" width="6" height="1.6" fill="#e5c07b" opacity="0.38"/><rect x="20" y="8" width="1" height="1.6" fill="#abb2bf" opacity="0.38"/><rect x="8" y="10" width="8" height="1.6" fill="#abb2bf" opacity="0.38"/><rect x="16" y="10" width="1" height="1.6" fill="#56b6c2" opacity="0.38"/><rect x="18" y="10" width="4" height="1.6" fill="#d19a66" opacity="0.38"/><rect x="4" y="12" width="2" height="1.6" fill="#abb2bf" opacity="0.38"/><rect x="4" y="14" width="4" height="1.6" fill="#abb2bf" opacity="0.38"/><rect x="8" y="14" width="1" height="1.6" fill="#56b6c2" opacity="0.38"/><rect x="10" y="14" width="1" height="1.6" fill="#abb2bf" opacity="0.38"/><rect x="8" y="16" width="4" height="1.6" fill="#abb2bf" opacity="0.38"/><rect x="12" y="16" width="1" height="1.6" fill="#56b6c2" opacity="0.38"/><rect x="14" y="16" width="4" height="1.6" fill="#e5c07b" opacity="0.38"/><rect x="18" y="16" width="1" height="1.6" fill="#abb2bf" opacity="0.38"/><rect x="8" y="18" width="7" height="1.6" fill="#abb2bf" opacity="0.38"/><rect x="15" y="18" width="1" height="1.6" fill="#56b6c2" opacity="0.38"/><rect x="17" y="18" width="4" height="1.6" fill="#e5c07b" opacity="0.38"/><rect x="21" y="18" width="1" height="1.6" fill="#abb2bf" opacity="0.38"/><rect x="22" y="18" width="3" height="1.6" fill="#e06c75" opacity="0.38"/><rect x="4" y="20" width="1" height="1.6" fill="#abb2bf" opacity="0.38"/><rect x="0" y="22" width="2" height="1.6" fill="#abb2bf" opacity="0.38"/><rect x="0" y="26" width="6" height="1.6" fill="#e06c75" opacity="0.38"/><rect x="6" y="26" width="1" height="1.6" fill="#abb2bf" opacity="0.38"/><rect x="7" y="26" width="7" height="1.6" fill="#e06c75" opacity="0.38"/><rect x="15" y="26" width="1" height="1.6" fill="#56b6c2" opacity="0.38"/><rect x="17" y="26" width="8" height="1.6" fill="#e06c75" opacity="0.38"/><rect x="25" y="26" width="1" height="1.6" fill="#abb2bf" opacity="0.38"/><rect x="26" y="26" width="5" height="1.6" fill="#61afef" opacity="0.38"/><rect x="31" y="26" width="1" height="1.6" fill="#abb2bf" opacity="0.38"/><rect x="32" y="26" width="10" height="1.6" fill="#98c379" opacity="0.38"/><rect x="42" y="26" width="17" height="1.6" fill="#abb2bf" opacity="0.38"/></svg>
<svg style="left:411px;top:81px" width="12" height="3"><rect x="0" y="0" width="1.6" height="1.6" fill="#9a9ea6"/><rect x="3.5" y="0" width="1.6" height="1.6" fill="#9a9ea6"/><rect x="7" y="0" width="1.6" height="1.6" fill="#9a9ea6"/></svg>
<svg style="left:1270px;top:81px" width="12" height="3"><rect x="0" y="0" width="1.6" height="1.6" fill="#9a9ea6"/><rect x="3.5" y="0" width="1.6" height="1.6" fill="#9a9ea6"/><rect x="7" y="0" width="1.6" height="1.6" fill="#9a9ea6"/></svg>
<div class="ln" style="top:65px;left:222px">1</div>
<div class="cl" style="top:65px;left:287px"><span class="k">const</span> <span class="d">express</span> <span class="o">=</span> <span class="o">require</span>(<span class="s">&#x27;express&#x27;</span>);</div>
<div class="ln" style="top:84px;left:222px">2</div>
<div class="cl" style="top:84px;left:287px"><span class="k">const</span> <span class="d">app</span> <span class="o">=</span> <span class="f">express</span>();</div>
<div class="ln" style="top:103px;left:222px">3</div>
<div class="cl" style="top:103px;left:287px"><span class="k">const</span> <span class="d">dotenv</span> <span class="o">=</span> <span class="o">require</span>(<span class="s">&quot;dotenv&quot;</span>);</div>
<div class="ln" style="top:122px;left:222px">4</div>
<div class="cl" style="top:122px;left:287px"><span class="k">const</span> <span class="d">mongoose</span> <span class="o">=</span> <span class="o">require</span>(<span class="s">&quot;mongoose&quot;</span>);</div>
<div class="ln" style="top:141px;left:222px">5</div>
<div class="ln act" style="top:160px;left:222px">6</div>
<div class="cl" style="top:160px;left:287px"><span class="c">//models</span></div>
<div class="ln" style="top:179px;left:222px">7</div>
<div class="cl" style="top:179px;left:287px"><span class="k">const</span> <span class="dd">TodoTask</span> <span class="o">=</span> <span class="o">require</span>(<span class="s">&quot;./models/TodoTask&quot;</span>);</div>
<div class="ln" style="top:198px;left:222px">8</div>
<div class="ln" style="top:217px;left:222px">9</div>
<div class="cl" style="top:217px;left:287px"><span class="r">dotenv</span>.<span class="f">config</span>();</div>
<div class="ln" style="top:236px;left:222px">10</div>
<div class="ln" style="top:255px;left:222px">11</div>
<div class="cl" style="top:255px;left:287px"><span class="r">app</span>.<span class="f">use</span>(<span class="s">&quot;/static&quot;</span>, <span class="r">express</span>.<span class="f">static</span>(<span class="s">&quot;public&quot;</span>));</div>
<div class="ln" style="top:274px;left:222px">12</div>
<div class="ln" style="top:293px;left:222px">13</div>
<div class="cl" style="top:293px;left:287px"><span class="r">app</span>.<span class="f">use</span>(<span class="r">express</span>.<span class="f">urlencoded</span>({ extended<span class="o">:</span> <span class="n">true</span> }));</div>
<div class="ln" style="top:312px;left:222px">14</div>
<div class="ln" style="top:331px;left:222px">15</div>
<div class="cl" style="top:331px;left:287px"><span class="c">//connection to db</span></div>
<div class="ln" style="top:350px;left:222px">16</div>
<div class="cl" style="top:350px;left:287px"><span class="r">mongoose</span>.<span class="f">set</span>(<span class="s">&quot;useFindAndModify&quot;</span>, <span class="n">false</span>);</div>
<div class="ln" style="top:369px;left:222px">17</div>
<div class="ln" style="top:388px;left:222px">18</div>
<div class="cl" style="top:388px;left:287px"><span class="r">mongoose</span>.<span class="f">connect</span>(<span class="r">process</span>.<span class="r">env</span>.<span class="n">DB_CONNECT</span>, { useNewUrlParser<span class="o">:</span> <span class="n">true</span> }, () <span class="k">=&gt;</span> {</div>
<div class="ln" style="top:407px;left:222px">19</div>
<div class="cl" style="top:407px;left:287px">  <span class="y">console</span>.<span class="o">log</span>(<span class="s">&quot;Connected to db!&quot;</span>);</div>
<div class="ln" style="top:426px;left:222px">20</div>
<div class="ln" style="top:445px;left:222px">21</div>
<div class="cl" style="top:445px;left:287px">  <span class="r">app</span>.<span class="f">listen</span>(<span class="n">3000</span>, () <span class="k">=&gt;</span> <span class="y">console</span>.<span class="o">log</span>(<span class="s">&quot;Server Up and running&quot;</span>));</div>
<div class="ln" style="top:464px;left:222px">22</div>
<div class="cl" style="top:464px;left:287px">});</div>
<div class="ln" style="top:483px;left:222px">23</div>
<div class="ln" style="top:502px;left:222px">24</div>
<div class="cl" style="top:502px;left:287px"><span class="c">//view engine configuration</span></div>
<div class="ln" style="top:521px;left:222px">25</div>
<div class="cl" style="top:521px;left:287px"><span class="r">app</span>.<span class="f">set</span>(<span class="s">&quot;view engine&quot;</span>, <span class="s">&quot;ejs&quot;</span>);</div>
<div class="ln" style="top:540px;left:222px">26</div>
<div class="ln" style="top:559px;left:222px">27</div>
<div class="ln" style="top:578px;left:222px">28</div>
<div class="cl" style="top:578px;left:287px"><span class="c">// GET METHOD</span></div>
<div class="ln" style="top:597px;left:222px">29</div>
<div class="cl" style="top:597px;left:287px"><span class="r">app</span>.<span class="f">get</span>(<span class="s">&#x27;/&#x27;</span>,(req, res) <span class="k">=&gt;</span> {</div>
<div class="ln" style="top:616px;left:222px">30</div>
<div class="cl" style="top:616px;left:287px">    <span class="r">res</span>.<span class="f">render</span>(<span class="s">&#x27;todo.ejs&#x27;</span>);</div>
<div class="ln" style="top:635px;left:222px">31</div>
<div class="cl" style="top:635px;left:287px">});</div>
<div class="ln" style="top:654px;left:222px">32</div>
<div class="ln" style="top:673px;left:222px">33</div>
<div class="cl" style="top:673px;left:287px"><span class="c">//POST METHOD</span></div>
<div class="ln" style="top:692px;left:222px">34</div>
<div class="cl" style="top:692px;left:287px"><span class="r">app</span>.<span class="f">post</span>(<span class="s">&#x27;/&#x27;</span>,(req, <span class="u">res</span>) <span class="k">=&gt;</span> {</div>
<div class="ln" style="top:711px;left:222px">35</div>
<div class="cl" style="top:711px;left:287px">    <span class="y">console</span>.<span class="o">log</span>(<span class="r">req</span>.<span class="r">body</span>);</div>
<div class="ln" style="top:730px;left:222px">36</div>
<div class="cl" style="top:730px;left:287px">});</div>
<div class="ln" style="top:749px;left:222px">37</div>
<div class="ln" style="top:65px;left:1072px">1</div>
<div class="cl" style="top:65px;left:1138px"><span class="k">const</span> <span class="d">mongoose</span> <span class="o">=</span> <span class="o">require</span>(<span class="s">&#x27;mongoose&#x27;</span>);</div>
<div class="ln" style="top:84px;left:1072px">2</div>
<div class="ln" style="top:103px;left:1072px">3</div>
<div class="cl" style="top:103px;left:1138px"><span class="k">const</span> <span class="d">todoTaskSchema</span> <span class="o">=</span> <span class="k">new</span> <span class="g">mongoose</span>.<span class="y">Schema</span>({</div>
<div class="ln" style="top:122px;left:1072px">4</div>
<div class="cl" style="top:122px;left:1138px">    content<span class="o">:</span> {</div>
<div class="ln" style="top:141px;left:1072px">5</div>
<div class="cl" style="top:141px;left:1138px">        type<span class="o">:</span> <span class="y">String</span>,</div>
<div class="ln" style="top:160px;left:1072px">6</div>
<div class="cl" style="top:160px;left:1138px">        required<span class="o">:</span> <span class="n">true</span></div>
<div class="ln" style="top:179px;left:1072px">7</div>
<div class="cl" style="top:179px;left:1138px">    },</div>
<div class="ln" style="top:198px;left:1072px">8</div>
<div class="cl" style="top:198px;left:1138px">    date<span class="o">:</span> {</div>
<div class="ln" style="top:217px;left:1072px">9</div>
<div class="cl" style="top:217px;left:1138px">        type<span class="o">:</span> <span class="y">Date</span>,</div>
<div class="ln" style="top:236px;left:1072px">10</div>
<div class="cl" style="top:236px;left:1138px">        default<span class="o">:</span> <span class="y">Date</span>.<span class="r">now</span></div>
<div class="ln" style="top:255px;left:1072px">11</div>
<div class="cl" style="top:255px;left:1138px">    }</div>
<div class="ln" style="top:274px;left:1072px">12</div>
<div class="cl" style="top:274px;left:1138px">})</div>
<div class="ln" style="top:293px;left:1072px">13</div>
<div class="ln act" style="top:312px;left:1072px">14</div>
<div class="cl" style="top:312px;left:1138px"><span class="r">module</span>.<span class="r">exports</span> <span class="o">=</span> <span class="r">mongoose</span>.<span class="f">model</span>(<span class="s">&#x27;TodoTask&#x27;</span>,todoTaskSchema);</div>
<div style="left:287px;top:159px;width:2px;height:19px;background:#528bff"></div>
<svg style="left:290px;top:158px" width="18" height="20" viewBox="0 0 18 20">
<path d="M7.5 1.2 C4.3 1.2 2.3 3.6 2.3 6.2 C2.3 8.6 3.9 9.6 4.6 11.2 V13 H10.4 V11.2 C11.1 9.6 12.7 8.6 12.7 6.2 C12.7 3.6 10.7 1.2 7.5 1.2 Z" fill="#f0c419" stroke="#1e1e1e" stroke-width="1"/>
<path d="M5.5 5.5 H9.5 M7.5 5.5 V11" stroke="#1e1e1e" stroke-width="1.1"/>
<path d="M4.8 14.2 H10.2 M4.8 16.2 H10.2" stroke="#e8e8e8" stroke-width="1.3"/>
<circle cx="12.6" cy="14.2" r="3.3" fill="#1a8ce0" stroke="#1e1e1e" stroke-width="1"/>
<rect x="11.6" y="13.2" width="2" height="2" fill="#ffffff"/>
</svg>

<div id="panel"></div>
<div id="pborder"></div>
<div class="ptab" id="m_prob" style="left:238.0px;transform:scaleX(0.898);transform-origin:0 0">PROBLEMS</div>
<div class="ptab" id="m_out" style="left:312.5px;transform:scaleX(0.916);transform-origin:0 0">OUTPUT</div>
<div class="ptab" id="m_dbg" style="left:372.5px;transform:scaleX(0.904);transform-origin:0 0">DEBUG CONSOLE</div>
<div class="ptab" id="m_tt" style="left:479.7px;color:#e6e8eb;transform:scaleX(0.920);transform-origin:0 0">TERMINAL</div>
<div style="left:479px;top:818px;width:52px;height:1px;background:#4b4f57"></div>
<div class="term" style="top:822px;color:#d4d6d9">    at Module.load (internal/modules/cjs/loader.js:600:32)</div>
<div class="term" style="top:839px;color:#d4d6d9">    at tryModuleLoad (internal/modules/cjs/loader.js:539:12)</div>
<div class="term" style="top:856px;color:#d4d6d9">    at Function.Module._load (internal/modules/cjs/loader.js:531:3)</div>
<div class="term" style="top:873px;color:#d4d6d9">    at Function.Module.runMain (internal/modules/cjs/loader.js:754:12)</div>
<div class="term" style="top:890px;color:#d4d6d9">    at startup (internal/bootstrap/node.js:283:19)</div>
<div class="term" style="top:907px;color:#d4d6d9">    at bootstrapNodeJSCore (internal/bootstrap/node.js:622:3)</div>
<div class="term" style="top:924px;color:#e03e3e">[nodemon] app crashed - waiting for file changes before starting...</div>
<div class="term" style="top:941px;color:#14b873">[nodemon] restarting due to changes...</div>
<div class="term" style="top:958px;color:#14b873">[nodemon] starting `node index.js`</div>
<div class="term" style="top:975px;color:#d4d6d9">Connected to db!</div>
<div class="term" style="top:992px;color:#d4d6d9">Server Up and running</div>
<div style="left:239px;top:1008px;width:8px;height:17px;border:1px solid #d4d6d9"></div>
<div style="left:1591px;top:794px;width:160px;height:21px;background:#353944;border:1px solid #1b1d22"></div>
<div class="it" id="m_node" style="left:1597px;top:794px;font-size:13px;color:#e3e4e6">1: node</div>
<svg style="left:1736px;top:800px" width="10" height="8"><path d="M1 1 H9 L5 7 Z" fill="#e3e4e6"/></svg>
<svg style="left:1767px;top:797px" width="16" height="16"><path d="M8 2 V14 M2 8 H14" stroke="#c5c7cb" stroke-width="2.6"/></svg>
<svg style="left:1799px;top:797px" width="16" height="16"><path d="M1.5 1.5 H14.5 V14 H1.5 Z M8 1.5 V14" stroke="#c5c7cb" stroke-width="1.6" fill="none"/><path d="M1 1 H15 V3.5 H1 Z" fill="#c5c7cb"/></svg>
<svg style="left:1830px;top:796px" width="16" height="18"><path d="M2 3.5 H14 M6 3.5 V1.5 H10 V3.5 M3.5 4 L4.3 16 H11.7 L12.5 4 Z" stroke="#c5c7cb" stroke-width="1.5" fill="none"/><path d="M6.3 6.5 V13.5 M8 6.5 V13.5 M9.7 6.5 V13.5" stroke="#c5c7cb" stroke-width="1"/></svg>
<svg style="left:1863px;top:797px" width="16" height="16"><path d="M2 11 L8 5 L14 11" stroke="#c5c7cb" stroke-width="1.7" fill="none"/></svg>
<svg style="left:1895px;top:797px" width="16" height="16"><path d="M3 3 L13 13 M13 3 L3 13" stroke="#c5c7cb" stroke-width="2.4"/></svg>
<div id="status"></div><div style="left:0;top:1049px;width:1920px;height:1px;background:#000"></div>

<svg style="left:16px;top:1032px" width="13" height="13"><circle cx="6.3" cy="6.6" r="5.6" fill="#b8bbc0"/><path d="M4 4.3 L8.6 8.9 M8.6 4.3 L4 8.9" stroke="#22252d" stroke-width="1.6"/></svg>
<div class="stt" id="m_s0" style="left:31px">0</div>
<svg style="left:43px;top:1032px" width="12" height="13"><path d="M5.5 0.8 L10.8 11.6 H0.2 Z" fill="#b8bbc0"/><path d="M5.5 4 V8 M5.5 9 V10.5" stroke="#22252d" stroke-width="1.3"/></svg>
<div class="stt" id="m_s1" style="left:58px">0</div>
<div class="stt" id="m_ln" style="left:1444.8px;transform:scaleX(0.970);transform-origin:0 0">Ln 6, Col 1 (56 selected)</div>
<div class="stt" id="m_sp" style="left:1586.2px;transform:scaleX(0.904);transform-origin:0 0">Spaces: 4</div>
<div class="stt" id="m_utf" style="left:1650.0px;transform:scaleX(0.924);transform-origin:0 0">UTF-8</div>
<div class="stt" id="m_crlf" style="left:1696.7px;transform:scaleX(0.839);transform-origin:0 0">CRLF</div>
<div class="stt" id="m_js" style="left:1737.5px;transform:scaleX(0.945);transform-origin:0 0">JavaScript</div>
<div class="stt" id="m_pr" style="left:1805.5px;transform:scaleX(1.005);transform-origin:0 0">Prettier</div>
<svg style="left:1860px;top:1029px" width="18" height="18"><circle cx="9" cy="8.9" r="7.1" fill="#b6b9c2"/><ellipse cx="6.6" cy="6.1" rx="0.9" ry="1.3" fill="#22252d"/><ellipse cx="11.4" cy="6.1" rx="0.9" ry="1.3" fill="#22252d"/><path d="M5 9.6 Q9 14.2 13 9.6" stroke="#22252d" stroke-width="1.3" fill="none"/></svg>
<svg style="left:1890px;top:1029px" width="18" height="18"><path d="M9 2.8 Q12.6 3.8 13 8.5 L14 12.2 L15.8 14 H2.7 L4.5 12.2 L5.4 8.5 Q5.8 3.8 9 2.8 Z" fill="#b6b9c2"/><path d="M7.3 15 H10.9 L9.1 16.6 Z" fill="#b6b9c2"/></svg>

</body></html>
